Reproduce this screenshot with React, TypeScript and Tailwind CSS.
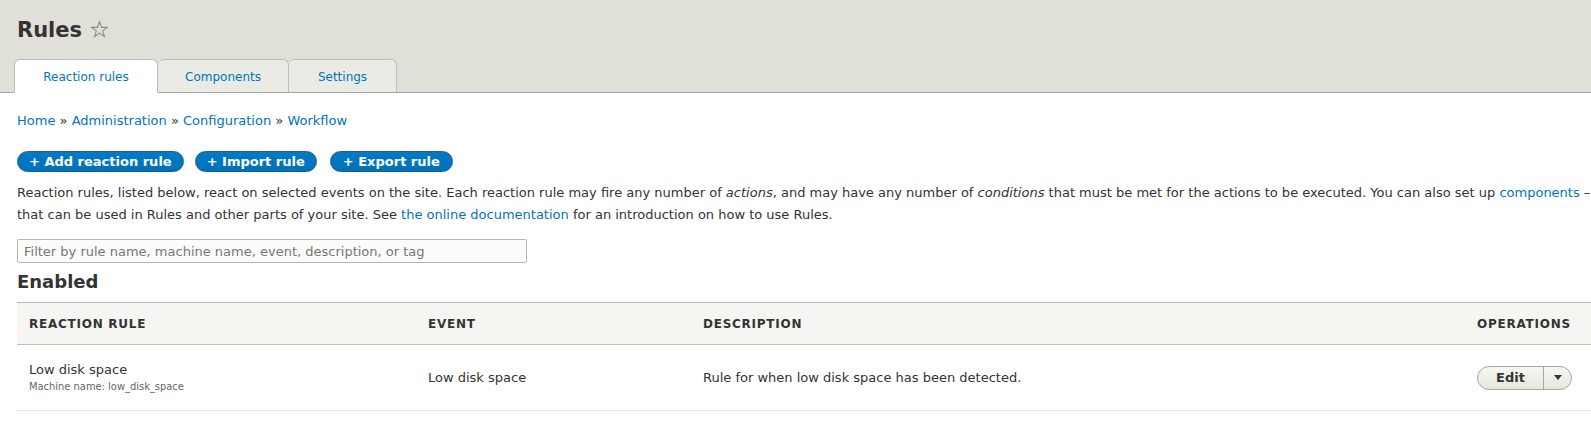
const font = "font-['DejaVu_Sans',sans-serif]";

const tabs = [
  { label: "Reaction rules", active: true, w: "w-[144px]" },
  { label: "Components", active: false, w: "w-[131px]" },
  { label: "Settings", active: false, w: "w-[108px]" },
];

const actions = [
  { label: "Add reaction rule", cls: "" },
  { label: "Import rule", cls: "" },
  { label: "Export rule", cls: "ml-[2px] px-[12px]" },
];

export default function App() {
  return (
    <div className={`w-[1591px] h-[427px] overflow-hidden bg-white text-[#333] ${font}`}>
      {/* Page header */}
      <header className="bg-[#e0e0d8] border-b border-[#a6a6a6] h-[93px] flex flex-col">
        <div className="flex items-center pl-[17px] pt-[7px] h-[52px]">
          <h1 className="text-[21px] font-bold leading-[30px] text-[#333]">Rules</h1>
          <svg className="ml-[8px] w-[19px] h-[19px]" viewBox="0 0 24 24" fill="none" stroke="#8a8a84" strokeWidth="1.3" strokeLinejoin="miter">
            <path d="M12 2.2 14.6 9.3 22 9.3 16 13.8 18.3 21 12 16.6 5.7 21 8 13.8 2 9.3 9.4 9.3Z" />
          </svg>
        </div>
        <nav className="mt-auto flex pl-[14px] h-[34px] mb-[-1px]">
          {tabs.map((t, i) => (
            <a
              key={t.label}
              className={`${t.w} flex items-center justify-center pt-[1px] text-[12px] text-[#0074bd] border border-[#bfbfba] rounded-t-[6px] ${
                i > 0 ? "border-l-0" : ""
              } ${t.active ? "bg-white border-b-white" : "bg-[#ebebe6] border-b-[#a6a6a6]"}`}
            >
              {t.label}
            </a>
          ))}
        </nav>
      </header>

      <main className="pl-[17px]">
        {/* Breadcrumb */}
        <div className="pt-[18px] text-[13px] leading-[20px] text-[#0074bd]">
          Home <span className="text-[#333]">»</span> Administration <span className="text-[#333]">»</span>{" "}
          Configuration <span className="text-[#333]">»</span> Workflow
        </div>

        {/* Action buttons */}
        <div className="flex gap-[11px] mt-[20px]">
          {actions.map((a) => (
            <button
              key={a.label}
              className={`h-[21px] px-[11px] rounded-full bg-gradient-to-b from-[#007bc6] to-[#0071b8] border border-[#1e5c90] text-white text-[13px] font-bold leading-none flex items-center ${a.cls}`}
            >
              + {a.label}
            </button>
          ))}
        </div>

        {/* Help text */}
        <div className="mt-[10px] text-[13px] leading-[22px] whitespace-nowrap">
          <p>
            Reaction rules, listed below, react on selected events on the site. Each reaction rule may fire any number of{" "}
            <em>actions</em>, and may have any number of <em>conditions</em> that must be met for the actions to be executed.
            You can also set up <a className="text-[#0074bd]">components</a> – stand-alone sets of Rules configuration
          </p>
          <p>
            that can be used in Rules and other parts of your site. See{" "}
            <a className="text-[#0074bd]">the online documentation</a> for an introduction on how to use Rules.
          </p>
        </div>

        {/* Filter */}
        <input
          className="mt-[13px] w-[510px] h-[24px] border border-[#b8b8b8] rounded-[2px] bg-[#fcfcfa] px-[6px] text-[13px] placeholder:text-[#777] outline-none"
          placeholder="Filter by rule name, machine name, event, description, or tag"
        />

        <h2 className="mt-[7px] text-[18px] font-bold leading-[24px]">Enabled</h2>

        {/* Table */}
        <table className="mt-[8px] w-[1600px] border-collapse table-fixed">
          <colgroup>
            <col className="w-[399px]" />
            <col className="w-[275px]" />
            <col className="w-[774px]" />
            <col />
          </colgroup>
          <thead>
            <tr className="bg-[#f5f5f2] border-t border-b border-[#bfbfba] h-[42px] text-left text-[12px] font-bold uppercase tracking-[0.75px]">
              <th className="px-[12px]">Reaction rule</th>
              <th className="px-[12px]">Event</th>
              <th className="px-[12px]">Description</th>
              <th className="px-[12px]">Operations</th>
            </tr>
          </thead>
          <tbody>
            <tr className="h-[66px] border-b border-[#e6e4df] text-[13px]">
              <td className="px-[12px] align-middle">
                <div className="leading-[18px]">Low disk space</div>
                <div className="text-[11px] leading-[16px] text-[#666] font-['DejaVu_Sans_Condensed','DejaVu_Sans',sans-serif]">
                  Machine name: low_disk_space
                </div>
              </td>
              <td className="px-[12px]">Low disk space</td>
              <td className="px-[12px]">Rule for when low disk space has been detected.</td>
              <td className="px-[12px]">
                <div className="flex w-[95px] h-[24px] rounded-full border border-[#a6a6a6] bg-gradient-to-b from-[#f6f6f3] to-[#e7e7df] overflow-hidden">
                  <span className="flex-1 flex items-center justify-center font-bold text-[13px]">Edit</span>
                  <span className="w-[28px] border-l border-[#a6a6a6] flex items-center justify-center">
                    <svg width="8" height="5" viewBox="0 0 8 5">
                      <path d="M0 0h8L4 5z" fill="#333" />
                    </svg>
                  </span>
                </div>
              </td>
            </tr>
          </tbody>
        </table>
      </main>
    </div>
  );
}
